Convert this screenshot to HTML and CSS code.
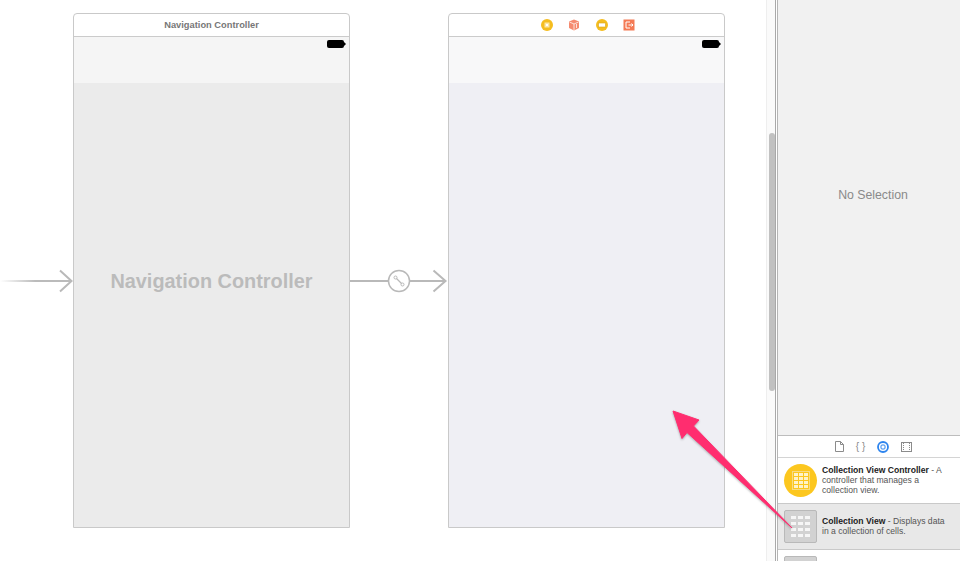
FILE: index.html
```html
<!DOCTYPE html>
<html lang="en">
<head>
    <meta charset="UTF-8">
    <title>Storyboard</title>
    <link rel="stylesheet" href="styles.css">
</head>
<body>
    <div class="editor">
        <div class="canvas">
            <svg class="segues" width="765" height="561" viewBox="0 0 765 561">
                <defs>
                    <linearGradient id="entry-fade" x1="0" y1="0" x2="1" y2="0">
                        <stop offset="0" stop-color="#bbb" stop-opacity="0"/>
                        <stop offset="0.5" stop-color="#bbb"/>
                    </linearGradient>
                </defs>
                <rect x="0" y="280" width="71" height="2" fill="url(#entry-fade)"/>
                <path d="M60 270.500 L71.500 281 L60 291.500" fill="none" stroke="#b9b9b9" stroke-width="2"/>
                <path d="M349 281 H388 M410 281 H445" fill="none" stroke="#b9b9b9" stroke-width="2"/>
                <path d="M433.500 270.500 L445.500 281 L433.500 291.500" fill="none" stroke="#b9b9b9" stroke-width="2"/>
                <circle cx="399" cy="281" r="10.500" fill="#fff" stroke="#b9b9b9" stroke-width="1.500"/>
                <path d="M396 278 L402 284" stroke="#b9b9b9" stroke-width="1.200"/>
                <circle cx="395.500" cy="277.500" r="1.500" fill="#fff" stroke="#b9b9b9"/>
                <circle cx="402.500" cy="284.500" r="1.500" fill="#fff" stroke="#b9b9b9"/>
            </svg>

            <div class="scene scene-nav">
                <div class="scene-title">Navigation Controller</div>
                <div class="scene-bar"><span class="battery"></span></div>
                <div class="scene-body">Navigation Controller</div>
            </div>

            <div class="scene scene-root">
                <div class="scene-title">
                    <svg width="12" height="12" viewBox="0 0 12 12"><circle cx="6" cy="6" r="6" fill="#f5bd1f"/><rect x="3.500" y="3.500" width="5" height="5" fill="#fbe7a8"/><rect x="5" y="5" width="2" height="2" fill="#fff"/></svg>
                    <svg width="12" height="12" viewBox="0 0 12 12"><path d="M6 .5 L11 2.500 V9 L6 11.500 L1 9 V2.500 Z" fill="#f58a6f"/><path d="M1.500 3 L6 5 L10.500 3 M6 5 V11 M8.500 5 V9" fill="none" stroke="#fde0d8"/></svg>
                    <svg width="12" height="12" viewBox="0 0 12 12"><circle cx="6" cy="6" r="6" fill="#f5bd1f"/><rect x="2.500" y="4" width="7" height="4" fill="#fff" stroke="#d9a514" stroke-width=".6"/></svg>
                    <svg width="12" height="12" viewBox="0 0 12 12"><rect x=".5" y=".5" width="11" height="11" fill="#f47a55"/><path d="M7 3 H3 V9 H7 M5.500 6 H10 M8.500 4.500 L10 6 L8.500 7.500" fill="none" stroke="#fff"/></svg>
                </div>
                <div class="scene-bar"><span class="battery"></span></div>
                <div class="scene-body"></div>
            </div>

            <div class="scroller"><div class="scroller-thumb"></div></div>
        </div>

        <div class="sidebar">
            <div class="inspector">No Selection</div>
            <div class="library-tabs">
                <svg width="9" height="11" viewBox="0 0 9 11"><path d="M.5 .5 H5.500 L8.500 3.500 V10.500 H.5 Z M5.500 .5 V3.500 H8.500" fill="none" stroke="#8b8b8b"/></svg>
                <span class="tab-braces">{ }</span>
                <svg width="12" height="12" viewBox="0 0 12 12"><circle cx="6" cy="6" r="5" fill="none" stroke="#2d84ee" stroke-width="1.800"/><rect x="4" y="4" width="4" height="4" rx="1" fill="none" stroke="#2d84ee"/></svg>
                <svg width="11" height="10" viewBox="0 0 11 10"><rect x=".5" y=".5" width="10" height="9" fill="none" stroke="#8b8b8b"/><path d="M2.500 1 V9 M8.500 1 V9" stroke="#8b8b8b" stroke-dasharray="1 1"/></svg>
            </div>
            <div class="library-row">
                <div class="object-icon icon-round">
                    <div class="cells cells-gold">
                        <i></i><i></i><i></i><i></i><i></i><i></i><i></i><i></i><i></i><i></i><i></i><i></i>
                    </div>
                </div>
                <p class="row-text"><b>Collection View Controller</b> - A controller that manages a collection view.</p>
            </div>
            <div class="library-row row-selected">
                <div class="object-icon icon-square">
                    <div class="cells">
                        <i></i><i></i><i></i><i></i><i></i><i></i><i></i><i></i><i></i><i></i><i></i><i></i>
                    </div>
                </div>
                <p class="row-text"><b>Collection View</b> - Displays data in a collection of cells.</p>
            </div>
            <div class="library-row">
                <div class="object-icon icon-square"></div>
                <p class="row-text"><b>Collection View Cell</b> - Defines</p>
            </div>
        </div>
    </div>

    <svg class="callout" width="130" height="130" viewBox="0 0 130 130">
        <path d="M3 1 L29 10 L23.500 16 L122 118 L17 22.500 L12 28.500 Z" fill="#ff2d6f" stroke="#ff2d6f" stroke-width="1" stroke-linejoin="round"/>
    </svg>
</body>
</html>
```

FILE: styles.css
```css
html, body {
    margin: 0;
    height: 561px;
    overflow: hidden;
    background: #fff;
    font-family: "Liberation Sans", Arial, sans-serif;
}
.editor {
    display: flex;
    height: 561px;
}
.canvas {
    position: relative;
    width: 777px;
    flex: none;
}
.segues {
    position: absolute;
    left: 0;
    top: 0;
}
.scene {
    position: absolute;
    top: 13px;
    width: 277px;
    height: 515px;
    box-sizing: border-box;
    display: flex;
    flex-direction: column;
    border: 1px solid #c9c9c9;
    border-radius: 4px 4px 0 0;
}
.scene-nav {
    left: 73px;
}
.scene-root {
    left: 448px;
}
.scene-title {
    height: 22px;
    flex: none;
    display: flex;
    align-items: center;
    justify-content: center;
    gap: 15.500px;
    border-bottom: 1px solid #cbcbcb;
    font-size: 9.300px;
    font-weight: bold;
    color: #777;
}
.scene-root .scene-title {
    padding-left: 3px;
}
.scene-bar {
    height: 46px;
    flex: none;
    display: flex;
    justify-content: flex-end;
    padding: 3px 4px 0 0;
    box-sizing: border-box;
    background: #f5f5f5;
}
.scene-root .scene-bar {
    background: #f8f8f9;
}
.battery {
    position: relative;
    width: 17px;
    height: 8px;
    background: #000;
    border-radius: 2px;
    margin-right: 1px;
}
.battery::after {
    content: "";
    position: absolute;
    right: -2px;
    top: 2px;
    border-left: 2px solid #000;
    border-top: 2px solid transparent;
    border-bottom: 2px solid transparent;
}
.scene-body {
    flex: 1;
    display: flex;
    align-items: center;
    justify-content: center;
    padding-bottom: 48px;
    background: #ebebeb;
    font-size: 19.900px;
    font-weight: bold;
    color: #bbb;
}
.scene-root .scene-body {
    background: #efeff4;
}
.scroller {
    position: absolute;
    left: 766px;
    top: 0;
    width: 10px;
    height: 561px;
    box-sizing: border-box;
    background: #fafafa;
    border-left: 1px solid #eee;
    border-right: 1px solid #a9a9a9;
}
.scroller-thumb {
    position: absolute;
    left: 2px;
    top: 133px;
    width: 6px;
    height: 258px;
    border-radius: 3px;
    background: #c1c1c1;
}
.sidebar {
    flex: 1;
    min-width: 0;
    height: 561px;
    overflow: hidden;
    display: flex;
    flex-direction: column;
    border-left: 1px solid #b5b5b5;
}
.inspector {
    height: 436px;
    flex: none;
    box-sizing: border-box;
    display: flex;
    align-items: center;
    justify-content: center;
    padding: 0 0 46px 8px;
    background: #f1f1f1;
    border-bottom: 1px solid #bdbdbd;
    font-size: 12.300px;
    color: #8a8a8a;
}
.library-tabs {
    height: 22px;
    flex: none;
    box-sizing: border-box;
    display: flex;
    align-items: center;
    justify-content: center;
    gap: 12px;
    padding-left: 9px;
    border-bottom: 1px solid #d4d4d4;
}
.tab-braces {
    font-size: 10px;
    color: #8b8b8b;
}
.library-row {
    height: 46px;
    flex: none;
    box-sizing: border-box;
    display: flex;
    align-items: center;
    gap: 5px;
    padding-left: 6px;
    border-bottom: 1px solid #c9c9c9;
}
.row-selected {
    background: #e8e8e8;
}
.object-icon {
    width: 33px;
    height: 33px;
    flex: none;
    box-sizing: border-box;
    display: flex;
    align-items: center;
    justify-content: center;
}
.icon-round {
    border-radius: 50%;
    background: #fcc71f;
}
.icon-square {
    background: #d2d2d2;
    border: 1px solid #b9b9b9;
    border-radius: 2px;
}
.cells {
    display: grid;
    grid-template-columns: repeat(3, 5px);
    grid-auto-rows: 3px;
    gap: 3px 2px;
}
.cells i {
    background: #f6f6f6;
}
.cells-gold {
    grid-template-columns: repeat(3, 4px);
    grid-auto-rows: 3px;
    gap: 1px;
    padding: 1px;
    border: 1px solid #f7dc84;
}
.cells-gold i {
    background: #fff3c8;
}
.row-text {
    margin: 0 0 2px;
    width: 124px;
    font-size: 8.600px;
    line-height: 10px;
    color: #555;
}
.row-text b {
    color: #222;
}
.callout {
    position: absolute;
    left: 670px;
    top: 410px;
    filter: drop-shadow(0 1px 1px rgba(0, 0, 0, .3));
}
```
